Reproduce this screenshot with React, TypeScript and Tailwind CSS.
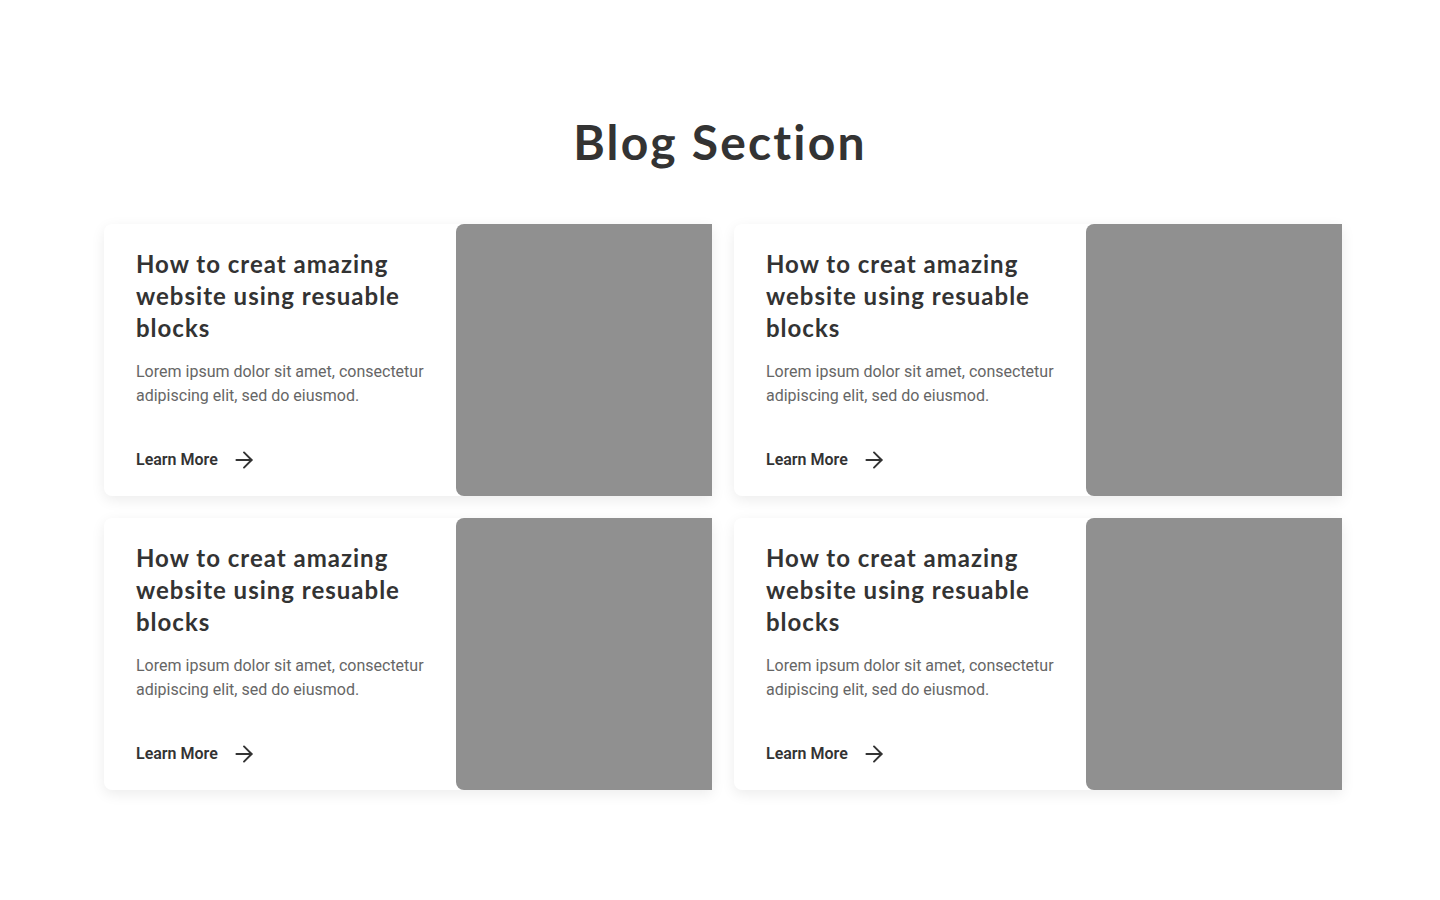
import React from "react";

function Arrow() {
  return (
    <svg width="26" height="26" viewBox="0 0 24 24" fill="none" stroke="#333333" strokeWidth="1.8" strokeLinecap="round" strokeLinejoin="round">
      <path d="M5 12h14" />
      <path d="m12 5 7 7-7 7" />
    </svg>
  );
}

function Card() {
  return (
    <div className="flex w-[608px] h-[272px] bg-white rounded-l-[8px] shadow-[0_4px_14px_rgba(0,0,0,0.08)]">
      <div className="flex flex-col w-[352px] pl-8 pr-6 pt-6 pb-[23px]">
        <h3 className="text-[24px] leading-[32px] font-bold text-[#333333] font-['Lato',sans-serif] tracking-[1px]">
          How to creat amazing website using resuable blocks
        </h3>
        <p className="mt-4 text-[16px] leading-[24px] text-[#666666] font-['Roboto',sans-serif]">
          Lorem ipsum dolor sit amet, consectetur adipiscing elit, sed do eiusmod.
        </p>
        <a className="mt-auto flex items-center gap-[13px] text-[16px] leading-[24px] font-semibold text-[#333333] font-['Roboto',sans-serif]">
          Learn More
          <Arrow />
        </a>
      </div>
      <div className="w-[256px] h-full bg-[#909090] rounded-l-[8px]" />
    </div>
  );
}

export default function App() {
  return (
    <div className="min-h-[900px] w-[1440px] bg-white">
      <div className="pt-[112px] flex flex-col items-center">
        <h1 className="text-[48px] leading-[60px] font-bold text-[#333333] font-['Lato',sans-serif] tracking-[2.2px]">
          Blog Section
        </h1>
        <div className="mt-[52px] grid grid-cols-[608px_608px] gap-[22px] ml-[6px]">
          <Card />
          <Card />
          <Card />
          <Card />
        </div>
      </div>
    </div>
  );
}
